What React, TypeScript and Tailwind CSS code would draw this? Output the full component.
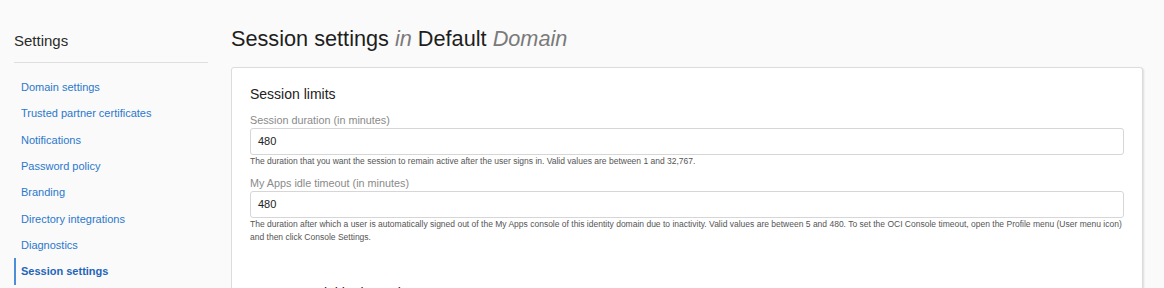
import React from "react";

const navItems = [
  "Domain settings",
  "Trusted partner certificates",
  "Notifications",
  "Password policy",
  "Branding",
  "Directory integrations",
  "Diagnostics",
  "Session settings",
];

export default function App() {
  return (
    <div
      className="w-[1164px] h-[288px] overflow-hidden bg-[#fafafa] flex pl-[14px] pr-[21px]"
      style={{ fontFamily: '"Liberation Sans", Arial, sans-serif' }}
    >
      <aside className="w-[194px] shrink-0 pt-[31px]">
        <h2 className="text-[15px] leading-[20px] text-[#2b2b2b] font-normal">Settings</h2>
        <div className="mt-[11px] h-px bg-[#dedede]" />
        <nav className="mt-[11px] flex flex-col">
          {navItems.map((item) => {
            const active = item === "Session settings";
            return (
              <a
                key={item}
                href="#"
                className={
                  active
                    ? "block h-[26.33px] leading-[26.33px] text-[11px] pl-[5px] border-l-2 border-[#4b8fd6] text-[#1f66b8] font-bold"
                    : "block h-[26.33px] leading-[26.33px] text-[11px] pl-[7px] text-[#2a78cc]"
                }
              >
                {item}
              </a>
            );
          })}
        </nav>
      </aside>
      <main className="ml-[23px] flex-1 pt-[25px]">
        <h1 className="text-[21.7px] leading-[28px] text-[#1e1e1e] font-normal">
          Session settings <span className="italic text-[#7a7a7a]">in</span> Default{" "}
          <span className="italic text-[#7a7a7a]">Domain</span>
        </h1>
        <section className="mt-[14px] bg-white border border-[#dcdcdc] rounded-[3px] shadow-[1px_1px_2px_rgba(0,0,0,0.12)] pt-[16px] px-[18px] h-[260px]">
          <h3 className="text-[14px] leading-[20px] text-[#222] font-normal">Session limits</h3>
          <label className="block mt-[9px] text-[10.8px] leading-[14px] text-[#8a8a8a]">
            Session duration (in minutes)
          </label>
          <div className="mt-[1px] h-[27px] border border-[#d6d6d6] rounded-[3px] bg-white flex items-center px-[7px] text-[11px] text-[#222]">
            480
          </div>
          <p className="text-[8.5px] leading-[13px] text-[#555]">
            The duration that you want the session to remain active after the user signs in. Valid values are between 1 and 32,767.
          </p>
          <label className="block mt-[8px] text-[10.8px] leading-[14px] text-[#8a8a8a]">
            My Apps idle timeout (in minutes)
          </label>
          <div className="mt-[1px] h-[27px] border border-[#d6d6d6] rounded-[3px] bg-white flex items-center px-[7px] text-[11px] text-[#222]">
            480
          </div>
          <p className="text-[8.5px] leading-[13px] text-[#555]">
            The duration after which a user is automatically signed out of the My Apps console of this identity domain due to inactivity. Valid values are between 5 and 480. To set the OCI Console timeout, open the Profile menu (User menu icon) and then click Console Settings.
          </p>
          <h3 className="mt-[39px] text-[14px] leading-[20px] text-[#222] font-normal">
            Custom social login settings
          </h3>
        </section>
      </main>
    </div>
  );
}
